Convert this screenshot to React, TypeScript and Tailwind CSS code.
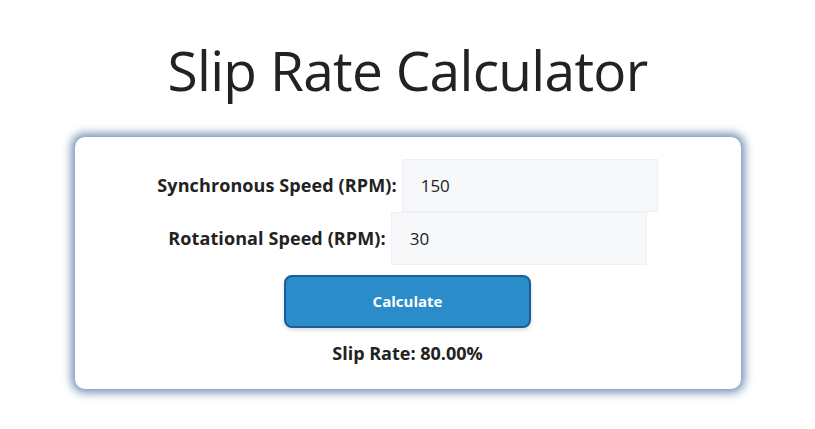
import React, { useState } from 'react';

export default function App() {
    const [syncSpeed, setSyncSpeed] = useState('150');
    const [rotSpeed, setRotSpeed] = useState('30');
    const [result, setResult] = useState('80.00%');

    const calculate = () => {
        const ns = parseFloat(syncSpeed);
        const nr = parseFloat(rotSpeed);
        if (!ns) return;
        setResult(`${(((ns - nr) / ns) * 100).toFixed(2)}%`);
    };

    return (
        <div className="min-h-screen bg-white font-['Open_Sans',sans-serif] text-[#222]">
            <div className="flex flex-col items-center pt-[30px]">
                <h1 className="text-[55px] leading-[80px] font-normal tracking-[-0.7px]">Slip Rate Calculator</h1>

                {/* Card */}
                <div className="mt-[27px] w-[666px] rounded-[10px] bg-white pt-[22px] pb-[22px] shadow-[0_0_9px_4px_rgba(100,135,175,0.85)]">
                    <div className="flex items-center justify-center">
                        <label className="text-[18px] font-bold mr-[5px] tracking-[0.1px]">Synchronous Speed (RPM):</label>
                        <input
                            value={syncSpeed}
                            onChange={(e) => setSyncSpeed(e.target.value)}
                            className="w-[256px] h-[53px] bg-[#f7f8fa] border border-[#eef0f3] pl-[18px] text-[17px] outline-none"
                        />
                    </div>
                    <div className="flex items-center justify-center">
                        <label className="text-[18px] font-bold mr-[5px] tracking-[0.1px]">Rotational Speed (RPM):</label>
                        <input
                            value={rotSpeed}
                            onChange={(e) => setRotSpeed(e.target.value)}
                            className="w-[256px] h-[53px] bg-[#f7f8fa] border border-[#eef0f3] pl-[18px] text-[17px] outline-none"
                        />
                    </div>
                    <div className="flex justify-center mt-[10px]">
                        <button
                            onClick={calculate}
                            className="w-[247px] h-[53px] rounded-[8px] bg-[#2a8cc9] border-2 border-[#1b5d98] text-white text-[15px] font-bold shadow-[0_2px_4px_rgba(0,0,0,0.15)]"
                        >
                            Calculate
                        </button>
                    </div>
                    <p className="mt-[12px] text-center text-[18px] font-bold">Slip Rate: {result}</p>
                </div>
            </div>
        </div>
    );
}
